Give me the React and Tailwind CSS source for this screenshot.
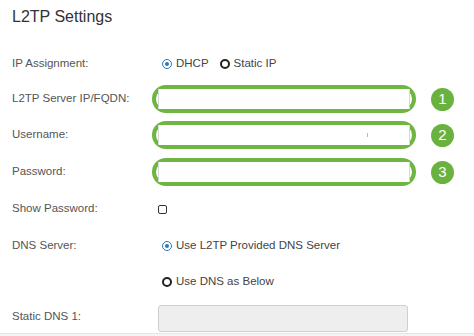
import React from 'react';

const Radio = ({ checked, label }) => (
  <span className="flex items-center gap-[4px]">
    {checked ? (
      <span className="w-[10px] h-[10px] rounded-full border-[1.5px] border-[#2a7ab8] flex items-center justify-center">
        <span className="w-[4px] h-[4px] rounded-full bg-[#2a7ab8]" />
      </span>
    ) : (
      <span className="w-[10px] h-[10px] rounded-full border-2 border-[#222]" />
    )}
    <span className="text-[#444]">{label}</span>
  </span>
);

const Badge = ({ n }) => (
  <span className="ml-[15px] w-[23px] h-[23px] rounded-full bg-[#6ab23f] text-white text-[15px] flex items-center justify-center">
    {n}
  </span>
);

const HighlightInput = ({ n, caret }) => (
  <div className="flex items-center">
    <div className="w-[264px] h-[28px] rounded-full border-4 border-[#6eb542] flex items-center px-[2px]">
      <div className="w-full h-[20px] border-x border-[#d8d8d8] bg-white flex items-center">
        {caret && <span className="ml-[208px] w-px h-[4px] bg-[#bbb]" />}
      </div>
    </div>
    <Badge n={n} />
  </div>
);

const Row = ({ label, h, children }) => (
  <div className={`flex items-center ${h}`}>
    <div className="w-[146px] text-[#555]">{label}</div>
    <div className="flex-1 flex items-center">{children}</div>
  </div>
);

export default function App() {
  return (
    <div
      className="w-[474px] h-[336px] overflow-hidden bg-white flex flex-col text-[11.5px]"
      style={{ fontFamily: '"Liberation Sans", Arial, sans-serif' }}
    >
      <div className="h-[46px] pl-[12px] pt-[6px]">
        <h1 className="text-[16px] leading-[22px] text-[#333]">L2TP Settings</h1>
      </div>
      <div className="flex flex-col pl-[12px]">
        <Row label="IP Assignment:" h="h-[36px]">
          <div className="flex items-center gap-[11px] pl-[4px]">
            <Radio checked label="DHCP" />
            <Radio label="Static IP" />
          </div>
        </Row>
        <Row label="L2TP Server IP/FQDN:" h="h-[34px]">
          <div className="-ml-[6px]"><HighlightInput n={1} /></div>
        </Row>
        <Row label="Username:" h="h-[38px]">
          <div className="-ml-[6px]"><HighlightInput n={2} caret /></div>
        </Row>
        <Row label="Password:" h="h-[36px]">
          <div className="-ml-[6px]"><HighlightInput n={3} /></div>
        </Row>
        <Row label="Show Password:" h="h-[38px]">
          <span className="w-[9px] h-[9px] rounded-[2px] border-[1.5px] border-[#333]" />
        </Row>
        <Row label="DNS Server:" h="h-[36px]">
          <div className="pl-[4px]"><Radio checked label="Use L2TP Provided DNS Server" /></div>
        </Row>
        <Row label="" h="h-[36px]">
          <div className="pl-[4px]"><Radio label="Use DNS as Below" /></div>
        </Row>
        <Row label="Static DNS 1:" h="h-[33px]">
          <div className="w-[250px] h-[27px] mt-[3px] rounded-[3px] border border-[#cfcfcf] bg-[#eeeeee]" />
        </Row>
      </div>
      <div className="h-[3px] border-t border-[#e6e6e6] bg-[#f4f4f4]" />
    </div>
  );
}
